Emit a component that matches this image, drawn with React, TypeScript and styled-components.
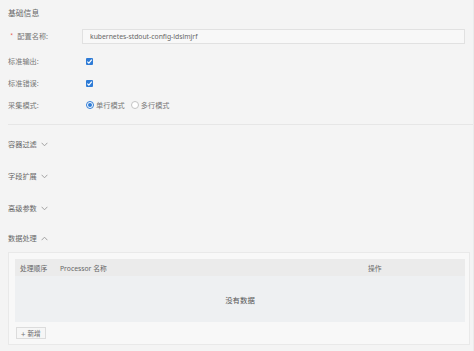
import styled, { createGlobalStyle } from "styled-components";

const GlobalStyle = createGlobalStyle`
  html, body {
    margin: 0;
    padding: 0;
    background: #f4f4f4;
  }
  * {
    box-sizing: border-box;
  }
`;

const App = () => {
  return (
    <Page>
      <GlobalStyle />
      <SectionTitle>基础信息</SectionTitle>
      <FormRow $first>
        <Label>
          <Required>*</Required>配置名称:
        </Label>
        <Input value="kubernetes-stdout-config-ldslmjrf" readOnly />
      </FormRow>
      <FormRow>
        <Label>标准输出:</Label>
        <Checkbox />
      </FormRow>
      <FormRow>
        <Label>标准错误:</Label>
        <Checkbox />
      </FormRow>
      <FormRow>
        <Label>采集模式:</Label>
        <RadioGroup>
          <RadioItem>
            <Radio $checked />
            单行模式
          </RadioItem>
          <RadioItem>
            <Radio />
            多行模式
          </RadioItem>
        </RadioGroup>
      </FormRow>
      <Divider />
      <CollapseHeader>
        容器过滤 <Chevron />
      </CollapseHeader>
      <CollapseHeader>
        字段扩展 <Chevron />
      </CollapseHeader>
      <CollapseHeader>
        高级参数 <Chevron />
      </CollapseHeader>
      <CollapseHeader $open>
        数据处理 <Chevron $up />
      </CollapseHeader>
      <Panel>
        <Table>
          <HeadRow>
            <OrderCell>处理顺序</OrderCell>
            <NameCell>Processor 名称</NameCell>
            <ActionCell>操作</ActionCell>
          </HeadRow>
          <Empty>没有数据</Empty>
        </Table>
        <AddButton>
          <span>+</span>新增
        </AddButton>
      </Panel>
    </Page>
  );
};
export default App;

const Checkbox = () => (
  <CheckBox>
    <svg width="7" height="7" viewBox="0 0 7 7">
      <path d="M1.3 3.6 L2.9 5.1 L5.8 1.6" fill="none" stroke="#fff" strokeWidth="1.2" />
    </svg>
  </CheckBox>
);

const Chevron = ({ $up }: { $up?: boolean }) => (
  <svg width="7" height="5" viewBox="0 0 7 5" style={{ marginLeft: 4 }}>
    <path
      d={$up ? "M0.6 4.2 L3.5 1.2 L6.4 4.2" : "M0.6 0.8 L3.5 3.8 L6.4 0.8"}
      fill="none"
      stroke="#999"
      strokeWidth="0.9"
    />
  </svg>
);

const Page = styled.div`
  width: 474px;
  height: 351px;
  padding: 0 4px 0 8px;
  font-family: "Noto Sans CJK SC", "Noto Sans", sans-serif;
  font-size: 7.2px;
  color: #777;
  background: #f4f4f4;
  border-right: 1px solid #ebebeb;
  overflow: hidden;
`;

const SectionTitle = styled.div`
  height: 25px;
  display: flex;
  align-items: center;
  font-size: 7.8px;
  color: #666;
`;

const FormRow = styled.div<{ $first?: boolean }>`
  height: 22px;
  display: flex;
  align-items: center;
  margin-bottom: ${(p) => (p.$first ? "3px" : "0")};
`;

const Label = styled.div`
  width: 74px;
  color: #777;
  display: flex;
  align-items: center;
`;

const Required = styled.span`
  color: #e8665a;
  margin: 0 4px 0 2px;
`;

const Input = styled.input`
  flex: 1;
  height: 15px;
  margin-right: 4px;
  border: 1px solid #e1e1e1;
  background: #f8f8f8;
  padding: 0 7px;
  font-family: "Noto Sans", "DejaVu Sans", sans-serif;
  font-size: 6.8px;
  color: #666;
  outline: none;
`;

const CheckBox = styled.span`
  width: 7px;
  height: 7px;
  margin-left: 4px;
  background: #2e7bd6;
  border-radius: 1px;
  display: flex;
`;

const RadioGroup = styled.div`
  display: flex;
  align-items: center;
  margin-left: 4px;
  gap: 6px;
`;

const RadioItem = styled.label`
  display: flex;
  align-items: center;
  gap: 2px;
  color: #777;
`;

const Radio = styled.span<{ $checked?: boolean }>`
  width: 8px;
  height: 8px;
  border-radius: 50%;
  border: 1px solid ${(p) => (p.$checked ? "#2e7bd6" : "#c4c4c4")};
  background: #fff;
  display: flex;
  align-items: center;
  justify-content: center;
  &::after {
    content: "";
    width: 4px;
    height: 4px;
    border-radius: 50%;
    background: ${(p) => (p.$checked ? "#2e7bd6" : "transparent")};
  }
`;

const Divider = styled.div`
  height: 1px;
  background: #e6e6e6;
  margin: 8px -4px 3px 0;
`;

const CollapseHeader = styled.div<{ $open?: boolean }>`
  height: ${(p) => (p.$open ? "28px" : "32px")};
  display: flex;
  align-items: center;
  color: #666;
`;

const Panel = styled.div`
  width: 462px;
  height: 93px;
  background: #f8f8f8;
  border: 1px solid #e9e9e9;
  padding: 6px 4px 0 6px;
`;

const Table = styled.div`
  display: flex;
  flex-direction: column;
`;

const HeadRow = styled.div`
  height: 17px;
  display: flex;
  align-items: center;
  background: #ebebeb;
  color: #666;
  font-size: 6.8px;
`;

const OrderCell = styled.div`
  width: 45px;
  padding-left: 5px;
`;

const NameCell = styled.div`
  flex: 1;
  font-family: "Noto Sans", "Noto Sans CJK SC", sans-serif;
`;

const ActionCell = styled.div`
  width: 97px;
`;

const Empty = styled.div`
  height: 46px;
  display: flex;
  align-items: center;
  justify-content: center;
  background: #eef0f2;
  color: #555;
  font-size: 7.4px;
`;

const AddButton = styled.button`
  margin-top: 5px;
  margin-left: 1px;
  height: 12px;
  padding: 0 4px;
  display: flex;
  align-items: center;
  gap: 2px;
  font-family: "Noto Sans CJK SC", sans-serif;
  font-size: 6.6px;
  color: #666;
  background: #f6f6f6;
  border: 1px solid #dcdcdc;
  cursor: pointer;
  span {
    font-size: 8px;
    color: #777;
  }
`;
